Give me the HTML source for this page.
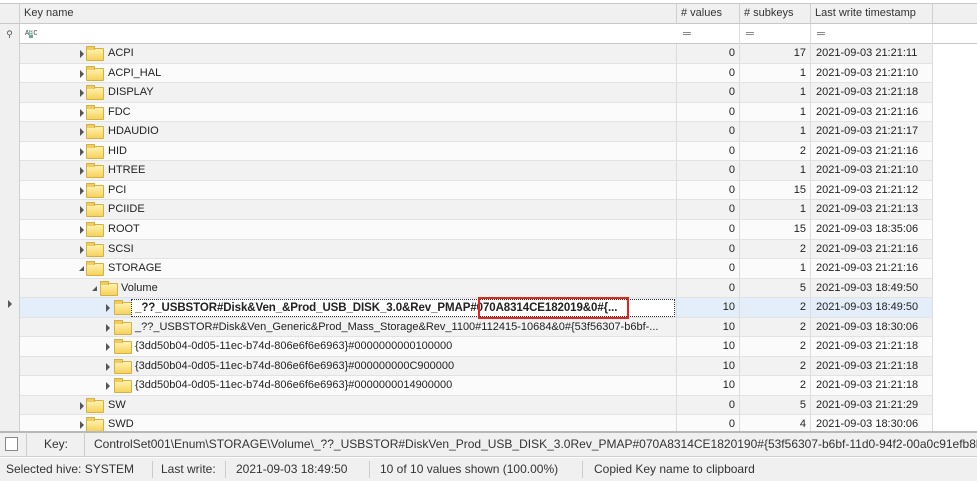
<!DOCTYPE html><html><head><style>
*{margin:0;padding:0;box-sizing:border-box}
body{width:977px;height:481px;overflow:hidden;background:#fff;font-family:"Liberation Sans",sans-serif;font-size:11px;color:#222;position:relative}
.a{position:absolute}
.hd{top:3px;height:21px;background:#f0f0f0;border-bottom:1px solid #c8c8c8;border-top:1px solid #c8c8c8}
.hc{position:absolute;top:3px;height:21px;line-height:20px;padding-left:4px;border-right:1px solid #d0d0d0;color:#333}
.fr{top:24px;height:20px;border-bottom:1px solid #c8c8c8}
.row{position:absolute;left:20px;width:913px;height:19.6px;border-bottom:1px solid #e2e2e2;line-height:19px}
.row.g{background:#f2f2f2}.row.w{background:#fbfbfb}
.row.sel{background:#e3eefa}
.c{position:absolute;top:0;height:100%;border-right:1px solid #dcdcdc}
.n{right:4px;text-align:right}
.arr{position:absolute;top:6px;width:0;height:0;border-top:4px solid transparent;border-bottom:4px solid transparent;border-left:4px solid #555}
.arrd{position:absolute;top:7px;width:0;height:0;border-left:5px solid transparent;border-bottom:5px solid #555}
.f{position:absolute;top:4px;width:18px;height:13px;background:linear-gradient(#fff2b0,#f5d25c);border:1px solid #d8b040;border-radius:1px}
.f:before{content:"";position:absolute;left:-1px;top:-3px;width:7px;height:3px;background:#f0cd60;border:1px solid #d8b040;border-bottom:none}
.t{position:absolute;top:0;white-space:nowrap}
</style></head><body>
<div class="a hd" style="left:0;width:977px"></div>
<div class="hc" style="left:0;width:20px"></div>
<div class="hc" style="left:20px;width:657px">Key name</div>
<div class="hc" style="left:677px;width:63px"># values</div>
<div class="hc" style="left:740px;width:71px"># subkeys</div>
<div class="hc" style="left:811px;width:122px">Last write timestamp</div>
<div class="a fr" style="left:0;width:977px"></div>
<div class="a" style="left:0;top:24px;width:20px;height:20px;background:#f0f0f0;border-right:1px solid #d0d0d0;text-align:center;line-height:20px;font-size:9px;color:#555">⚲</div>
<div class="a" style="left:25px;top:30px;font-size:7px;color:#444;font-family:'Liberation Mono',monospace">A<span style="background:#6a9;color:#fff">B</span>C</div>
<div class="a" style="left:677px;top:24px;width:63px;height:20px;border-right:1px solid #ddd;padding-left:6px;color:#666;line-height:20px">═</div>
<div class="a" style="left:740px;top:24px;width:71px;height:20px;border-right:1px solid #ddd;padding-left:6px;color:#666;line-height:20px">═</div>
<div class="a" style="left:811px;top:24px;width:122px;height:20px;border-right:1px solid #ddd;padding-left:6px;color:#666;line-height:20px">═</div>
<div class="a" style="left:0;top:44px;width:20px;height:387px;background:#f0f0f0;border-right:1px solid #d0d0d0"></div>
<div class="a" style="left:933px;top:44px;width:44px;height:387px;background:#fff"></div>
<div id="rows"></div>
<script>
var d=[["ACPI",1,0,17,"2021-09-03 21:21:11"],["ACPI_HAL",1,0,1,"2021-09-03 21:21:10"],["DISPLAY",1,0,1,"2021-09-03 21:21:18"],["FDC",1,0,1,"2021-09-03 21:21:16"],["HDAUDIO",1,0,1,"2021-09-03 21:21:17"],["HID",1,0,2,"2021-09-03 21:21:16"],["HTREE",1,0,1,"2021-09-03 21:21:10"],["PCI",1,0,15,"2021-09-03 21:21:12"],["PCIIDE",1,0,1,"2021-09-03 21:21:13"],["ROOT",1,0,15,"2021-09-03 18:35:06"],["SCSI",1,0,2,"2021-09-03 21:21:16"],["STORAGE",1,0,1,"2021-09-03 21:21:16","o"],["Volume",2,0,5,"2021-09-03 18:49:50","o"],["_??_USBSTOR#Disk&amp;Ven_&amp;Prod_USB_DISK_3.0&amp;Rev_PMAP#070A8314CE182019&amp;0#{...",3,10,2,"2021-09-03 18:49:50","s"],["_??_USBSTOR#Disk&amp;Ven_Generic&amp;Prod_Mass_Storage&amp;Rev_1100#112415-10684&amp;0#{53f56307-b6bf-...",3,10,2,"2021-09-03 18:30:06"],["{3dd50b04-0d05-11ec-b74d-806e6f6e6963}#0000000000100000",3,10,2,"2021-09-03 21:21:18"],["{3dd50b04-0d05-11ec-b74d-806e6f6e6963}#000000000C900000",3,10,2,"2021-09-03 21:21:18"],["{3dd50b04-0d05-11ec-b74d-806e6f6e6963}#0000000014900000",3,10,2,"2021-09-03 21:21:18"],["SW",1,0,5,"2021-09-03 21:21:29"],["SWD",1,0,4,"2021-09-03 18:30:06"]];
var h="";d.forEach(function(r,i){var top=44+i*19.55;var lv=r[1];var ax=[0,80,93,106][lv]-20;var fx=[0,86,100,114][lv]-20;var tx=[0,108,121,135][lv]-20;
var cls=r[5]=="s"?"sel":(i%2?"w":"g");
var arr=r[5]=="o"?'<div class="arrd" style="left:'+(ax-1)+'px"></div>':'<div class="arr" style="left:'+ax+'px"></div>';
var txt=r[5]=="s"?'<div class="t" style="left:'+(tx-4)+'px;width:'+(657-tx+2)+'px;height:18px;top:1px;line-height:17px;padding-left:3px;border:1px dotted #333;background:#fff;font-weight:bold;font-size:11.5px;letter-spacing:-0.08px">'+r[0]+'</div>':'<div class="t" style="left:'+tx+'px">'+r[0]+'</div>';
h+='<div class="row '+cls+'" style="top:'+top+'px"><div class="c" style="left:0;width:657px"></div>'+arr+'<div class="f" style="left:'+fx+'px"></div>'+txt+'<div class="c" style="left:657px;width:63px"><span class="t n">'+r[2]+'</span></div><div class="c" style="left:720px;width:71px"><span class="t n">'+r[3]+'</span></div><div class="c" style="left:791px;width:122px"><span class="t" style="left:5px">'+r[4]+'</span></div></div>';});
document.getElementById("rows").innerHTML=h;
</script>
<div class="arr" style="left:8px;top:300px"></div>
<div class="a" style="left:478px;top:297px;width:151px;height:22px;border:2px solid #e8231b"></div>
<div class="a" style="left:0;top:431px;width:977px;height:26px;background:#f0f0f0;border-top:2px solid #b8b8b8;border-bottom:1px solid #d0d0d0"></div>
<div class="a" style="left:5px;top:437px;width:13px;height:14px;border:1px solid #888;background:#fff"></div>
<div class="a" style="left:26px;top:432px;height:24px;border-left:1px solid #ccc"></div>
<div class="a" style="left:44px;top:437px;font-size:12px;color:#333">Key:</div>
<div class="a" style="left:84px;top:432px;height:24px;border-left:1px solid #ccc"></div>
<div class="a" style="left:94px;top:437px;font-size:12px;color:#333;white-space:nowrap">ControlSet001\Enum\STORAGE\Volume\_??_USBSTOR#DiskVen_Prod_USB_DISK_3.0Rev_PMAP#070A8314CE1820190#{53f56307-b6bf-11d0-94f2-00a0c91efb8b}</div>
<div class="a" style="left:0;top:458px;width:977px;height:23px;background:#f0f0f0;font-size:12px;color:#333;line-height:23px;white-space:nowrap">
<span class="a" style="left:6px">Selected hive: SYSTEM</span><span class="a" style="left:152px;top:3px;height:17px;border-left:1px solid #ccc"></span>
<span class="a" style="left:161px">Last write:</span><span class="a" style="left:225px;top:3px;height:17px;border-left:1px solid #ccc"></span>
<span class="a" style="left:236px">2021-09-03 18:49:50</span><span class="a" style="left:369px;top:3px;height:17px;border-left:1px solid #ccc"></span>
<span class="a" style="left:380px">10 of 10 values shown (100.00%)</span><span class="a" style="left:582px;top:3px;height:17px;border-left:1px solid #ccc"></span>
<span class="a" style="left:594px">Copied Key name to clipboard</span></div>
</body></html>
